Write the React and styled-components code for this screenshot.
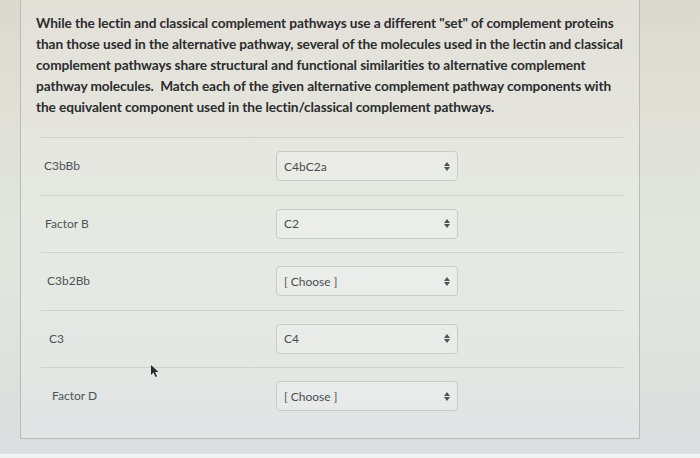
import styled, { createGlobalStyle } from 'styled-components';

const Global = createGlobalStyle`
  html, body { margin: 0; padding: 0; }
  body {
    width: 700px;
    height: 458px;
    overflow: hidden;
    background: linear-gradient(180deg, #dcd9cf 0%, #e0e1d8 30%, #e1e6de 55%, #dde2df 80%, #d9dede 99%, #f2f4f4 99.2%);
    font-family: Lato, "Open Sans", sans-serif;
  }
`

const Page = styled.div`
  padding: 0 60px 0 20px;
  position: relative;
`

const Card = styled.div`
  background: rgba(255, 255, 255, 0.18);
  border: 1px solid #b9bcb6;
  border-top: none;
  height: 439px;
  box-sizing: border-box;
  padding-top: 12px;
`

const Question = styled.p`
  margin: 0 0 20px;
  padding-left: 15px;
  font-size: 13.7px;
  font-weight: 700;
  line-height: 21px;
  color: #2b2d2e;
  white-space: nowrap;
  letter-spacing: -0.1px;
`

const Rows = styled.div`
  margin: 0 16px 0 20px;
`

const Row = styled.div`
  display: flex;
  align-items: flex-start;
  height: 57.5px;
  box-sizing: border-box;
  border-top: 1px solid #cfd2cb;
  padding-top: 13px;
`

const Label = styled.div`
  width: 235px;
  padding-left: ${p => p.$shift}px;
  box-sizing: border-box;
  margin-top: 7px;
  font-size: 12px;
  color: #4f5356;
`

const Select = styled.div`
  width: 182px;
  height: 30px;
  box-sizing: border-box;
  border: 1px solid #c9ccc6;
  border-radius: 4px;
  background: rgba(255, 255, 255, 0.2);
  display: flex;
  align-items: center;
  justify-content: space-between;
  padding: 0 7px;
  font-size: 12px;
  color: #4a4e51;
`

const Arrows = styled.span`
  display: flex;
  flex-direction: column;
  align-items: center;
  gap: 1px;
  &::before, &::after {
    content: "";
    width: 0;
    height: 0;
    border-left: 3px solid transparent;
    border-right: 3px solid transparent;
  }
  &::before { border-bottom: 4px solid #4f5356; }
  &::after { border-top: 4px solid #4f5356; }
`

const Cursor = styled.svg`
  position: absolute;
  left: 150px;
  top: 364px;
`

const items = [
  ['C3bBb', 'C4bC2a', 3],
  ['Factor B', 'C2', 4],
  ['C3b2Bb', '[ Choose ]', 6],
  ['C3', 'C4', 8],
  ['Factor D', '[ Choose ]', 11],
]

export default function App() {
  return (
    <>
      <Global />
      <Page>
        <Card>
          <Question>
            While the lectin and classical complement pathways use a different "set" of complement proteins<br />
            than those used in the alternative pathway, several of the molecules used in the lectin and classical<br />
            complement pathways share structural and functional similarities to alternative complement<br />
            pathway molecules.&nbsp; Match each of the given alternative complement pathway components with<br />
            the equivalent component used in the lectin/classical complement pathways.
          </Question>
          <Rows>
            {items.map(([label, value, shift]) => (
              <Row key={label}>
                <Label $shift={shift}>{label}</Label>
                <Select>
                  <span>{value}</span>
                  <Arrows />
                </Select>
              </Row>
            ))}
          </Rows>
        </Card>
        <Cursor width="10" height="14" viewBox="0 0 10 14">
          <path d="M1 1 L1 11 L3.5 8.5 L5.5 13 L7 12.3 L5 8 L8.5 8 Z" fill="#2a2c2e" />
        </Cursor>
      </Page>
    </>
  );
}
